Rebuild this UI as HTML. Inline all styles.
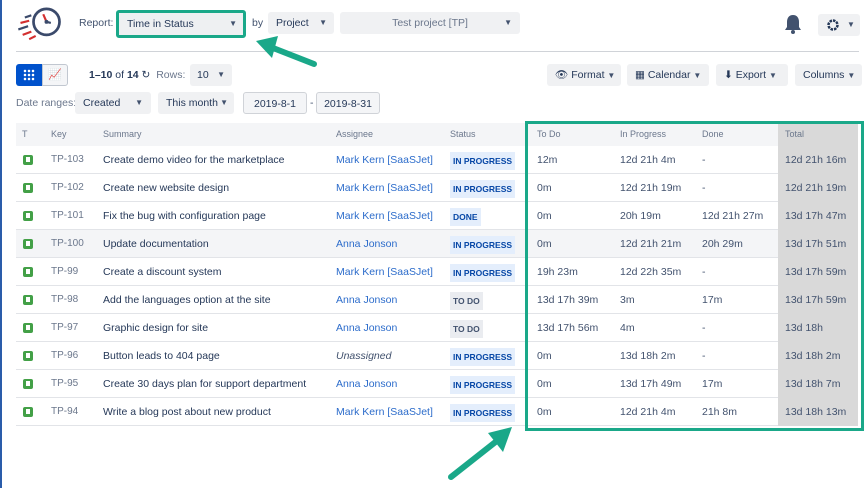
<!DOCTYPE html>
<html><head><meta charset="utf-8"><style>
*{margin:0;padding:0;box-sizing:border-box}
body{width:868px;height:488px;background:#fff;font-family:"Liberation Sans",sans-serif;font-size:10.5px;color:#42526e;position:relative;overflow:hidden}
.a{position:absolute}
.btn{position:absolute;background:#f0f1f3;border-radius:3px;height:22px;line-height:22px;font-size:10.5px;color:#253858}
.car{font-size:8px;color:#42526e}
.tr{position:absolute;left:16px;width:842px;height:28px;border-bottom:1px solid #e2e4e8}
.tr span{position:absolute;top:1px;line-height:26px;white-space:nowrap}
.ic{position:absolute;left:7px;top:9px;width:10px;height:10px;background:#43a047;border-radius:2px}
.ic:after{content:"";position:absolute;left:3px;top:2px;width:4px;height:5px;background:#fff}
.st{background:#e4eefc;color:#0747a6;font-size:8.5px;font-weight:bold;padding:2px 3px;line-height:14px!important;top:6px!important}
.st.g{background:#eaecf0;color:#42526e}
.tot{position:absolute;left:762px;width:80px;top:0;height:28px;background:#d9d9d9}
.lnk{color:#2c6ccb}
</style></head><body>
<div class="a" style="left:0;top:0;width:2px;height:488px;background:#2a5caa"></div>
<svg class="a" style="left:14px;top:4px" width="52" height="40" viewBox="0 0 48 36">
<circle cx="30" cy="16" r="12" fill="#fff" stroke="#3b4a6b" stroke-width="2.5"/>
<line x1="30" y1="16" x2="27" y2="9" stroke="#d32f2f" stroke-width="2"/>
<line x1="30" y1="16" x2="34" y2="17" stroke="#3b4a6b" stroke-width="2"/>
<circle cx="30" cy="16" r="1.8" fill="#3b4a6b"/>
<line x1="10" y1="12" x2="16" y2="10" stroke="#3b4a6b" stroke-width="2"/>
<line x1="6" y1="17" x2="14" y2="15" stroke="#d32f2f" stroke-width="2"/>
<line x1="4" y1="23" x2="13" y2="20" stroke="#3b4a6b" stroke-width="2"/>
<line x1="8" y1="28" x2="16" y2="25" stroke="#d32f2f" stroke-width="2"/>
<line x1="14" y1="32" x2="20" y2="29" stroke="#d32f2f" stroke-width="2"/>
</svg>
<div class="a" style="left:79px;top:17px;color:#42526e">Report:</div>
<div class="btn" style="left:116px;top:10px;width:130px;padding-left:8px;border:3px solid #1aa889;height:28px;line-height:22px;background:#eef0f2">Time in Status<span class="car a" style="right:6px;top:0">▼</span></div>
<div class="a" style="left:252px;top:17px">by</div>
<div class="btn" style="left:268px;top:12px;width:66px;padding-left:8px">Project<span class="car a" style="right:7px">▼</span></div>
<div class="btn" style="left:340px;top:12px;width:180px;text-align:center;color:#6b778c">Test project [TP]<span class="car a" style="right:8px">▼</span></div>
<svg class="a" style="left:784px;top:14px" width="18" height="20" viewBox="0 0 18 20"><path d="M9 1c-4 0-6 3-6 7v5l-2 3h16l-2-3V8c0-4-2-7-6-7z" fill="#42526e"/><circle cx="9" cy="18" r="2" fill="#42526e"/></svg>
<div class="btn" style="left:818px;top:14px;width:42px;height:22px"><svg class="a" style="left:8px;top:4px" width="14" height="14" viewBox="0 0 14 14"><circle cx="7" cy="7" r="4.5" fill="none" stroke="#253858" stroke-width="2.5" stroke-dasharray="2.5 1"/><circle cx="7" cy="7" r="2" fill="#f0f1f3"/></svg><span class="car a" style="left:29px">▼</span></div>
<div class="a" style="left:16px;top:51px;width:843px;height:1px;background:#d0d3d8"></div>
<svg class="a" style="left:250px;top:34px" width="80" height="40"><line x1="64" y1="30" x2="18" y2="12" stroke="#1aa889" stroke-width="6" stroke-linecap="round"/><polygon points="6,7 28,2 22,24" fill="#1aa889"/></svg>
<div class="a" style="left:16px;top:64px;width:26px;height:22px;background:#0052cc;border-radius:3px 0 0 3px"></div>
<div class="a" style="left:23px;top:69px;width:12px;height:12px;background:radial-gradient(circle,#fff 1.2px,transparent 1.4px) 0 0/4px 4px"></div>
<div class="a" style="left:42px;top:64px;width:26px;height:22px;background:#f4f5f7;border:1px solid #c1c7d0;border-radius:0 3px 3px 0;text-align:center;line-height:20px;font-size:11px;color:#172b4d">&#x1F4C8;</div>
<div class="a" style="left:89px;top:69px;color:#253858"><b>1–10</b> of <b>14</b> ↻ &nbsp;<span style="color:#6b778c">Rows:</span></div>
<div class="btn" style="left:190px;top:64px;width:42px;padding-left:7px">10<span class="car a" style="right:7px">▼</span></div>
<div class="btn" style="left:547px;top:64px;width:74px;padding-left:8px">👁 Format <span class="car">▼</span></div>
<div class="btn" style="left:627px;top:64px;width:82px;padding-left:8px">▦ Calendar <span class="car">▼</span></div>
<div class="btn" style="left:716px;top:64px;width:72px;padding-left:8px">⬇ Export <span class="car">▼</span></div>
<div class="btn" style="left:795px;top:64px;width:67px;padding-left:8px">Columns <span class="car">▼</span></div>
<div class="a" style="left:16px;top:97px;color:#6b778c">Date ranges:</div>
<div class="btn" style="left:75px;top:92px;width:76px;padding-left:8px">Created<span class="car a" style="right:8px">▼</span></div>
<div class="btn" style="left:158px;top:92px;width:76px;padding-left:8px">This month<span class="car a" style="right:6px">▼</span></div>
<div class="btn" style="left:243px;top:92px;width:64px;text-align:center;background:#f4f5f7;border:1px solid #d0d3d8">2019-8-1</div>
<div class="a" style="left:310px;top:97px">-</div>
<div class="btn" style="left:316px;top:92px;width:64px;text-align:center;background:#f4f5f7;border:1px solid #d0d3d8">2019-8-31</div>
<div class="a" style="left:16px;top:123px;width:842px;height:23px;background:#f4f5f7;color:#6b778c;font-size:9px">
<span class="a" style="left:6px;top:6px">T</span><span class="a" style="left:35px;top:6px">Key</span><span class="a" style="left:87px;top:6px">Summary</span><span class="a" style="left:320px;top:6px">Assignee</span><span class="a" style="left:434px;top:6px">Status</span><span class="a" style="left:521px;top:6px">To Do</span><span class="a" style="left:604px;top:6px">In Progress</span><span class="a" style="left:686px;top:6px">Done</span><div class="tot" style="height:23px"></div><span class="a" style="left:769px;top:6px">Total</span></div>
<div id="rows"></div>
<script>
var d=[["TP-103","Create demo video for the marketplace","Mark Kern [SaaSJet]","IN PROGRESS","12m","12d 21h 4m","-","12d 21h 16m"],
["TP-102","Create new website design","Mark Kern [SaaSJet]","IN PROGRESS","0m","12d 21h 19m","-","12d 21h 19m"],
["TP-101","Fix the bug with configuration page","Mark Kern [SaaSJet]","DONE","0m","20h 19m","12d 21h 27m","13d 17h 47m"],
["TP-100","Update documentation","Anna Jonson","IN PROGRESS","0m","12d 21h 21m","20h 29m","13d 17h 51m"],
["TP-99","Create a discount system","Mark Kern [SaaSJet]","IN PROGRESS","19h 23m","12d 22h 35m","-","13d 17h 59m"],
["TP-98","Add the languages option at the site","Anna Jonson","TO DO","13d 17h 39m","3m","17m","13d 17h 59m"],
["TP-97","Graphic design for site","Anna Jonson","TO DO","13d 17h 56m","4m","-","13d 18h"],
["TP-96","Button leads to 404 page","Unassigned","IN PROGRESS","0m","13d 18h 2m","-","13d 18h 2m"],
["TP-95","Create 30 days plan for support department","Anna Jonson","IN PROGRESS","0m","13d 17h 49m","17m","13d 18h 7m"],
["TP-94","Write a blog post about new product","Mark Kern [SaaSJet]","IN PROGRESS","0m","12d 21h 4m","21h 8m","13d 18h 13m"]];
var h="";d.forEach(function(r,i){var y=146+i*28;var un=r[2]=="Unassigned";
h+='<div class="tr" style="top:'+y+'px;'+(i==3?'background:#f4f5f7':'')+'"><div class="tot"></div><div class="ic"></div>'+
'<span style="left:35px;color:#6b778c;font-size:10px">'+r[0]+'</span><span style="left:87px;color:#253858">'+r[1]+'</span>'+
(un?'<span style="left:320px;font-style:italic;color:#42526e">':'<span class="lnk" style="left:320px">')+r[2]+'</span>'+
'<span class="st'+(r[3]=="TO DO"?' g':'')+'" style="left:434px">'+r[3]+'</span>'+
'<span style="left:521px">'+r[4]+'</span><span style="left:604px">'+r[5]+'</span><span style="left:686px">'+r[6]+'</span><span style="left:769px">'+r[7]+'</span></div>';});
document.getElementById("rows").innerHTML=h;
</script>
<div class="a" style="left:525px;top:121px;width:339px;height:310px;border:3px solid #1aa889"></div>
<svg class="a" style="left:440px;top:420px" width="90" height="65"><line x1="11" y1="57" x2="58" y2="20" stroke="#1aa889" stroke-width="6" stroke-linecap="round"/><polygon points="72,7 48,13 63,32" fill="#1aa889"/></svg>
</body></html>
